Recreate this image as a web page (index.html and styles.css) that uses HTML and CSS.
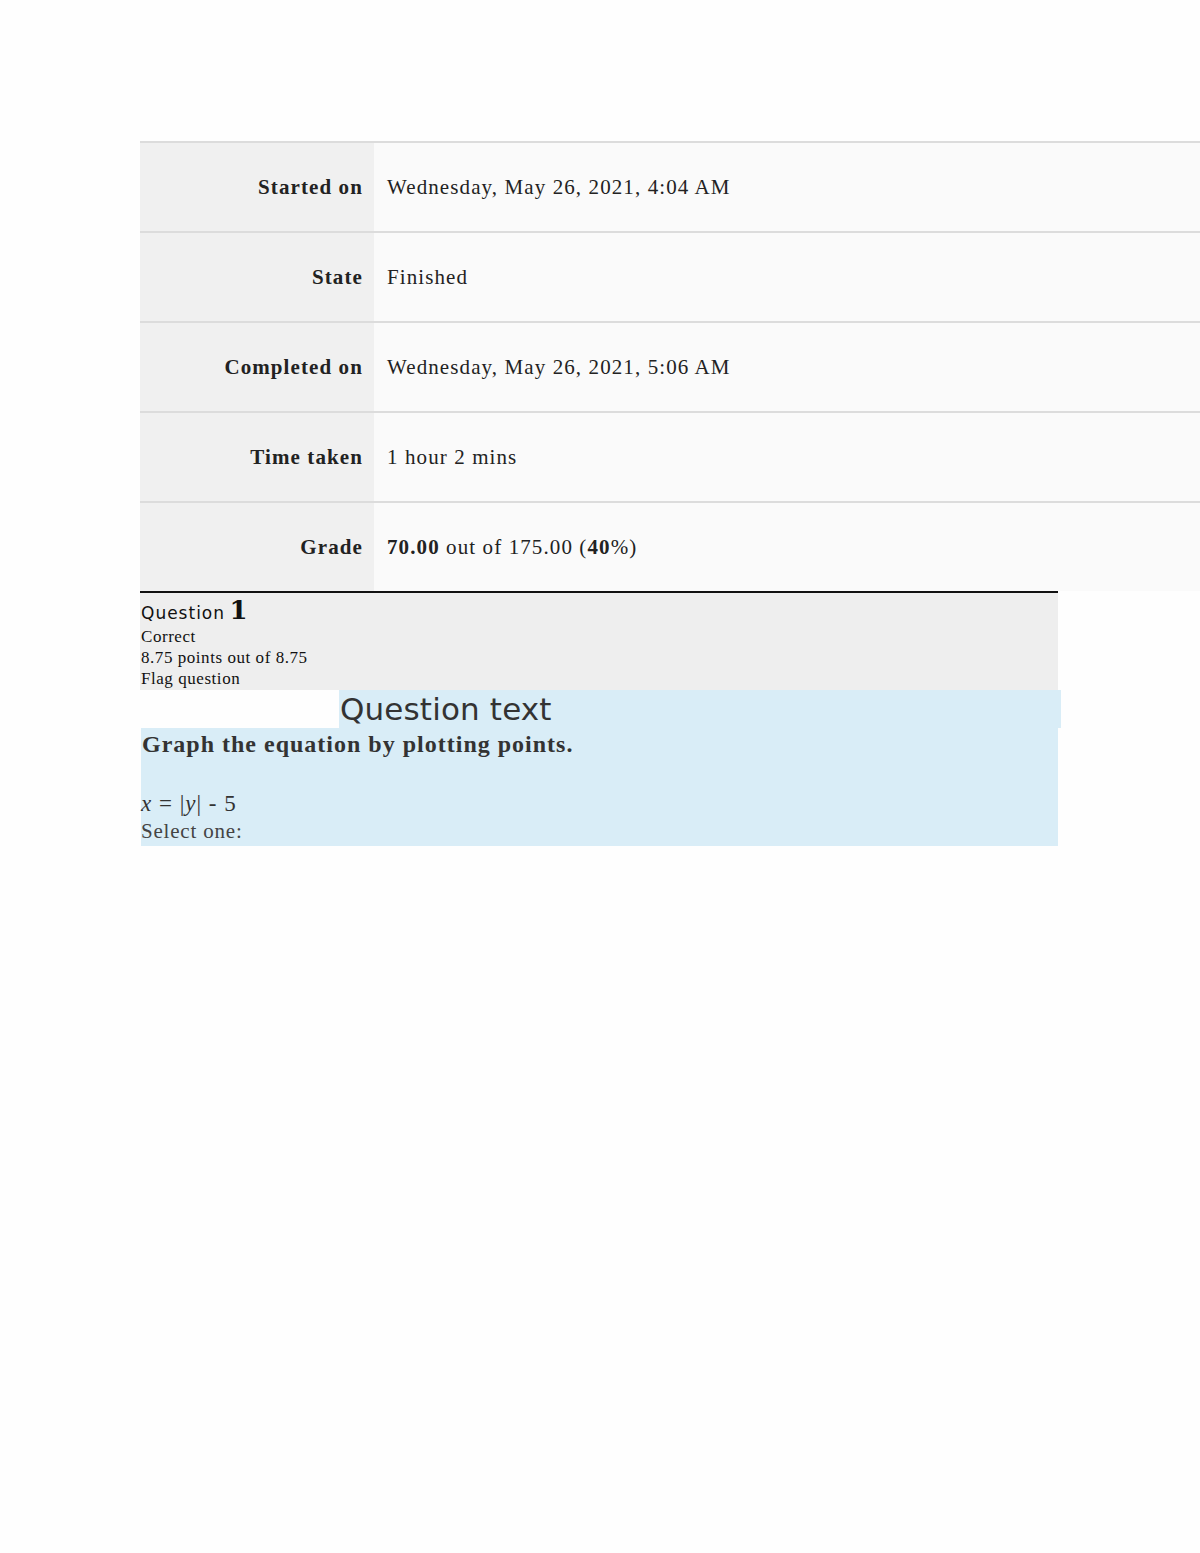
FILE: index.html
```html
<!DOCTYPE html>
<html>
<head>
<meta charset="utf-8">
<link rel="stylesheet" href="styles.css">
</head>
<body>
<div class="page">
  <table class="summary">
    <tr><th>Started on</th><td>Wednesday, May 26, 2021, 4:04 AM</td></tr>
    <tr><th>State</th><td>Finished</td></tr>
    <tr><th>Completed on</th><td>Wednesday, May 26, 2021, 5:06 AM</td></tr>
    <tr><th>Time taken</th><td>1 hour 2 mins</td></tr>
    <tr><th>Grade</th><td><b>70.00</b> out of 175.00 (<b>40</b>%)</td></tr>
  </table>
  <div class="question">
    <div class="info">
      <div class="qno">Question <span class="num">1</span></div>
      <div class="meta">Correct</div>
      <div class="meta">8.75 points out of 8.75</div>
      <div class="meta">Flag question</div>
    </div>
    <div class="qtext-head"><span class="qtext-label">Question text</span></div>
    <div class="content">
      <div class="prompt">Graph the equation by plotting points.</div>
      <div class="eq"><i>x</i> = |<i>y</i>| - 5</div>
      <div class="select">Select one:</div>
    </div>
  </div>
</div>
</body>
</html>
```
FILE: styles.css
```css
html, body { margin: 0; padding: 0; background: #fefefe; }
.page { padding: 141px 0 0 140px; }
.summary {
  border-collapse: collapse;
  width: 1060px;
  font-family: "Liberation Serif", serif;
  font-size: 21px;
  letter-spacing: 1.1px;
  color: #222;
}
.summary th, .summary td {
  border-top: 2px solid #dcdcdc;
  height: 88px;
  vertical-align: middle;
  padding: 0;
}
.summary th {
  width: 223px;
  background: #f0f0f0;
  text-align: right;
  padding-right: 11px;
  font-weight: bold;
}
.summary td {
  background: #fafafa;
  padding-left: 13px;
}
.question { width: 917px; padding-left: 1px; }
.info {
  background: #eeeeee;
  border-top: 2px solid #111;
  margin-left: -1px;
  padding-left: 1px;
  padding-bottom: 1px;
}
.qno {
  font-family: "DejaVu Sans", sans-serif;
  font-size: 17px;
  letter-spacing: 1px;
  color: #111;
  line-height: 26px;
  padding-top: 4px;
}
.num { font-family: "DejaVu Serif", serif; font-weight: bold; font-size: 26px; letter-spacing: 0; margin-left: -2px; }
.meta {
  font-family: "Liberation Serif", serif;
  font-size: 17px;
  letter-spacing: 0.55px;
  line-height: 21px;
  color: #111;
}
.qtext-head { display: flex; background: #fefefe; }
.qtext-label {
  flex-shrink: 0;
  margin-left: 198px;
  width: 721px;
  background: #d9edf7;
  font-family: "DejaVu Sans", sans-serif;
  font-size: 31px;
  letter-spacing: 0.15px;
  color: #333;
  line-height: 38px;
  padding-left: 1px;
}
.content {
  background: #d9edf7;
  color: #333;
  padding-bottom: 2px;
}
.prompt {
  font-family: "Liberation Serif", serif;
  font-weight: bold;
  font-size: 24px;
  letter-spacing: 1px;
  line-height: 32px;
  padding-left: 1px;
  height: 62px;
}
.eq {
  font-family: "Liberation Serif", serif;
  font-size: 23px;
  letter-spacing: 1px;
  line-height: 28px;
}
.select {
  font-family: "Liberation Serif", serif;
  font-size: 21px;
  letter-spacing: 0.8px;
  line-height: 26px;
  color: #444;
}
```
